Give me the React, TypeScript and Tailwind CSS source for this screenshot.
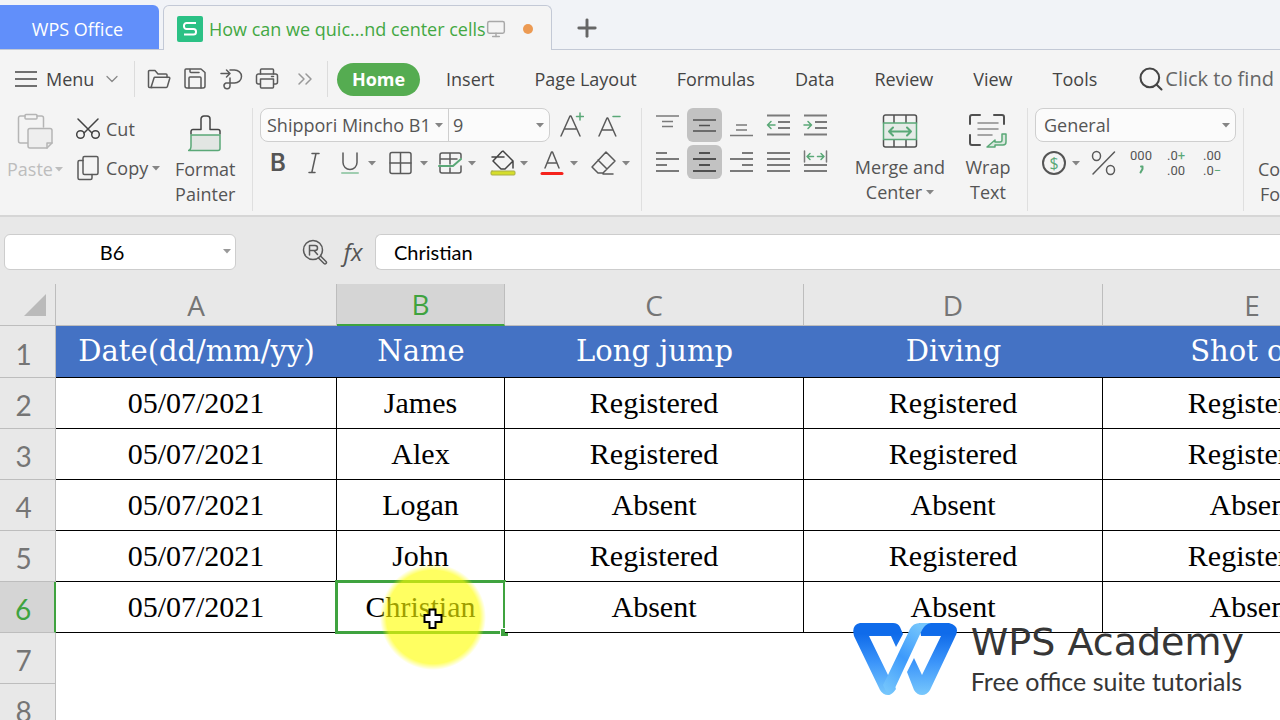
/**
 * Spreadsheet window: tab strip, ribbon, formula bar and the sheet itself.
 */

import { ReactNode } from 'react';
import { ChevronDown, ChevronsRight, Menu, Monitor, Plus, Search } from 'lucide-react';

interface ChildrenProps {
  children: ReactNode;
}

interface IconProps {
  w: number;
  h: number;
  className?: string;
  children: ReactNode;
}

function Icon({ w, h, className = 'text-[#5a5a5a]', children }: IconProps) {
  return (
    <svg
      width={w}
      height={h}
      viewBox={`0 0 ${w} ${h}`}
      fill="none"
      stroke="currentColor"
      strokeWidth="1.5"
      strokeLinecap="round"
      strokeLinejoin="round"
      className={`shrink-0 ${className}`}
      aria-hidden="true"
    >
      {children}
    </svg>
  );
}

const GREEN = '#5aa877';

function Caret({ className = 'text-[#858585]' }: { className?: string }) {
  return (
    <svg width="8" height="5" viewBox="0 0 8 5" className={`shrink-0 ${className}`} aria-hidden="true">
      <path d="M0 0h8L4 4.5z" fill="currentColor" />
    </svg>
  );
}

function Divider() {
  return <div className="w-px shrink-0 self-stretch bg-[#dfdfdf]" />;
}

/* ---------- Tab strip ---------- */

function TabStrip() {
  return (
    <header className="flex h-[50px] shrink-0 border-b border-[#c3c9d6] bg-[#f1f3f7] pt-[5px]">
      <button className="w-[159px] shrink-0 rounded-tr-md bg-[#618ffa] pr-1 pt-1 text-lg text-white">WPS Office</button>
      <div className="-mb-px ml-1 flex w-[389px] shrink-0 items-center rounded-t-md border border-b-0 border-[#c3c9d6] bg-[#f4f4f4] pl-[13px] pt-0.5">
        <svg width="26" height="26" viewBox="0 0 26 26" className="shrink-0" aria-hidden="true">
          <rect width="26" height="26" rx="2" fill="#2bc185" />
          <path
            d="M19 7H9.500a2.500 2.500 0 0 0-2.500 2.500v1a2.500 2.500 0 0 0 2.500 2.500h7a2.500 2.500 0 0 1 2.500 2.500v.5a2.500 2.500 0 0 1-2.500 2.500H7"
            fill="none"
            stroke="#fff"
            strokeWidth="2"
          />
        </svg>
        <span className="ml-1.5 whitespace-nowrap text-lg text-[#43a843]">How can we quic...nd center cells</span>
        <Monitor className="h-5 w-5 shrink-0 text-[#a8a8a8]" strokeWidth={1.75} />
        <span className="ml-auto mr-[18px] h-2.5 w-2.5 shrink-0 rounded-full bg-[#ec9a52]" />
      </div>
      <button aria-label="New tab" className="ml-[19px] flex w-8 items-center justify-center pt-0.5 text-[#666]">
        <Plus className="h-7 w-7" strokeWidth={2.5} />
      </button>
    </header>
  );
}

/* ---------- Menu bar ---------- */

const MENU_TABS = ['Insert', 'Page Layout', 'Formulas', 'Data', 'Review', 'View', 'Tools'];

function MenuBar() {
  return (
    <nav className="flex h-[58px] shrink-0 items-center whitespace-nowrap pl-[14px] text-lg text-[#444]">
      <button className="flex shrink-0 items-center">
        <svg width="24" height="24" viewBox="0 0 24 24" stroke="currentColor" strokeWidth="1.5" aria-hidden="true">
          <path d="M1 5h22M1 12h22M1 19h22" />
        </svg>
        <span className="ml-2 w-[50px] text-left">Menu</span>
        <ChevronDown className="ml-1.5 h-5 w-5 text-[#888]" strokeWidth={1.5} />
      </button>
      <div className="ml-3 h-9 w-px shrink-0 bg-[#dcdcdc]" />

      <div className="ml-3 flex shrink-0 items-center gap-3">
        <button aria-label="Open">
          <Icon w={24} h={24}>
            <path d="M5 20.500H2.500a1 1 0 0 1-1-1v-15a1 1 0 0 1 1-1h5.500l3 3.500h8a1 1 0 0 1 1 1v2.500" />
            <path d="M4 20.500l3-9.500a1 1 0 0 1 1-.7h14a.8.8 0 0 1 .8 1l-2.500 8.400a1 1 0 0 1-1 .8z" />
          </Icon>
        </button>
        <button aria-label="Save">
          <Icon w={24} h={24}>
            <path d="M3 2h15l4 3.500V19a2 2 0 0 1-2 2H4a2 2 0 0 1-2-2V3a1 1 0 0 1 1-1z" />
            <path d="M6 21V11a1 1 0 0 1 1-1h10a1 1 0 0 1 1 1v10M7 2.500V4.500a1 1 0 0 0 1 1h8" />
          </Icon>
        </button>
        <button aria-label="Export to PDF">
          <Icon w={24} h={24}>
            <path d="M2 6.500h8.500M7.500 3l3.500 3.500L7.500 10" />
            <path d="M11 3h4.500a7 6.500 0 0 1 0 13H7a3 3 0 1 0 4 3V11" />
          </Icon>
        </button>
        <button aria-label="Print">
          <Icon w={24} h={24}>
            <path d="M5.500 7V3a1 1 0 0 1 1-1h11a1 1 0 0 1 1 1v4" />
            <path d="M5 17H3.500A2 2 0 0 1 1.500 15V9a2 2 0 0 1 2-2h17a2 2 0 0 1 2 2v6a2 2 0 0 1-2 2H19M16.500 9.500h2" />
            <path d="M5.500 12h13v8a1 1 0 0 1-1 1h-11a1 1 0 0 1-1-1z" />
          </Icon>
        </button>
        <button aria-label="More" className="ml-0.5 text-[#999]">
          <ChevronsRight className="h-6 w-6" strokeWidth={1.5} />
        </button>
      </div>
      <div className="ml-2.5 h-9 w-px shrink-0 bg-[#dcdcdc]" />

      <button className="ml-[9px] h-[33px] w-[83px] shrink-0 rounded-full bg-[#55ac51] font-bold text-white">Home</button>
      <div className="ml-1.5 flex shrink-0">
        {MENU_TABS.map((tab) => (
          <button key={tab} className="px-5">
            {tab}
          </button>
        ))}
      </div>
      <label className="ml-5 flex min-w-0 flex-1 items-center text-xl text-[#666]">
        <Search className="h-7 w-7 shrink-0 text-[#444]" strokeWidth={1.75} />
        <input
          aria-label="Click to find"
          placeholder="Click to find"
          className="min-w-0 flex-1 bg-transparent outline-none placeholder:text-[#666]"
        />
      </label>
    </nav>
  );
}

/* ---------- Ribbon ---------- */

function ClipboardGroup() {
  return (
    <div className="flex w-[252px] shrink-0 items-start">
      <button className="flex w-[70px] flex-col items-center pt-[5px] text-[#bdbdbd]">
        <Icon w={38} h={38} className="text-[#b5b5b5]">
          <path d="M9 3H4.500a2 2 0 0 0-2 2v23a2 2 0 0 0 2 2H12M21 3h4.500a2 2 0 0 1 2 2v9" />
          <path d="M10 1.500h10a1 1 0 0 1 1 1V5a1 1 0 0 1-1 1H10a1 1 0 0 1-1-1V2.500a1 1 0 0 1 1-1z" />
          <path d="M14 15.500h20a2 2 0 0 1 2 2V30l-5 5H14a2 2 0 0 1-2-2V17.500a2 2 0 0 1 2-2z" fill="#eee" />
          <path d="M36 30h-5v5" />
        </Icon>
        <span className="mt-1 flex items-center gap-0.5">
          Paste
          <Caret className="text-[#bdbdbd]" />
        </span>
      </button>
      <div className="ml-1.5 flex flex-col gap-[11px] pt-[7px]">
        <button className="flex items-center gap-1.5">
          <Icon w={24} h={22} className="text-[#444]">
            <path d="M2 1l14 14M22 1L8 15" />
            <circle cx="4.500" cy="16.500" r="3.800" />
            <circle cx="19.500" cy="16.500" r="3.800" />
          </Icon>
          Cut
        </button>
        <button className="flex items-center gap-1.5">
          <Icon w={24} h={26}>
            <path d="M8.500 1.500h12a1.500 1.500 0 0 1 1.500 1.500v15a1.500 1.500 0 0 1-1.500 1.500h-12A1.500 1.500 0 0 1 7 18V3a1.500 1.500 0 0 1 1.500-1.500z" />
            <path d="M7 5.500H3.500A1.500 1.500 0 0 0 2 7v16a1.500 1.500 0 0 0 1.500 1.500h11A1.500 1.500 0 0 0 16 23v-3.500" />
          </Icon>
          <span className="flex items-center gap-1">
            Copy
            <Caret />
          </span>
        </button>
      </div>
      <button className="ml-3 flex w-[66px] flex-col items-center pt-[7px] leading-[25px]">
        <Icon w={34} h={38} className="text-[#444]">
          <path d="M3 19v-2.500a2 2 0 0 1 2-2h8V4a3 3 0 0 1 3-3h3a3 3 0 0 1 3 3v10.500h8a2 2 0 0 1 2 2V19" />
          <path d="M3 20h29v13.500a2 2 0 0 1-2 2H.5C2.500 35 3 33 3 31z" stroke={GREEN} fill="#e2e6e3" />
        </Icon>
        <span className="mt-1">
          Format
          <br />
          Painter
        </span>
      </button>
    </div>
  );
}

function FontGroup() {
  return (
    <div className="w-[388px] shrink-0 pl-[7px]">
      <div className="flex h-[34px] items-center">
        <div className="flex h-full w-[290px] rounded-lg border border-[#cfcfcf] bg-[#fbfbfb]">
          <div className="relative flex w-[188px] items-center border-r border-[#cfcfcf]">
            <select aria-label="Font" className="w-full appearance-none bg-transparent pl-1.5">
              <option>Shippori Mincho B1</option>
            </select>
            <Caret className="absolute right-[5px] text-[#858585]" />
          </div>
          <div className="relative flex flex-1 items-center">
            <select aria-label="Font size" className="w-full appearance-none bg-transparent pl-1">
              <option>9</option>
            </select>
            <Caret className="absolute right-[5px] text-[#858585]" />
          </div>
        </div>
        <button aria-label="Increase font size" className="ml-2.5">
          <Icon w={24} h={26}>
            <path d="M1 24L10 4h1l9 20M4.500 17h12" />
            <path d="M20 1v7M16.500 4.500h7" stroke={GREEN} />
          </Icon>
        </button>
        <button aria-label="Decrease font size" className="ml-3.5">
          <Icon w={24} h={26}>
            <path d="M1 24L9 6h.8l8 18M4 18h11" />
            <path d="M15 4.500h7" stroke={GREEN} />
          </Icon>
        </button>
      </div>
      <div className="mt-[7px] flex h-7 items-center">
        <button className="w-9 text-2xl font-semibold text-[#555] [font-family:Inter,sans-serif]">B</button>
        <button aria-label="Italic" className="flex w-9 justify-center">
          <Icon w={12} h={22}>
            <path d="M4 1.500h7M1 20.500h6M8 1.500L3.800 20.500" />
          </Icon>
        </button>
        <button aria-label="Underline" className="ml-2 flex w-9 items-center justify-between">
          <Icon w={20} h={24}>
            <path d="M3 2v9.500a7 7 0 0 0 14 0V2" />
            <path d="M2 22h16" stroke="#9fcdb0" strokeWidth="2" />
          </Icon>
          <Caret />
        </button>
        <button aria-label="Borders" className="ml-3 flex w-10 items-center justify-between">
          <Icon w={24} h={24}>
            <rect x="2" y="1.500" width="21" height="21" rx="2" />
            <path d="M12.500 2v20M2 12h21" />
          </Icon>
          <Caret />
        </button>
        <button aria-label="Cell style" className="ml-2.5 flex w-[38px] items-center justify-between">
          <Icon w={24} h={24}>
            <path d="M2 13V4a2 2 0 0 1 2-2h17a2 2 0 0 1 2 2v3M23 15v5a2 2 0 0 1-2 2H4a2 2 0 0 1-2-2v-4M12 2v11M12 17v5M2 8h17" />
            <path d="M1 15h14l8-7" stroke={GREEN} strokeWidth="2" />
          </Icon>
          <Caret />
        </button>
        <button aria-label="Fill colour" className="ml-3.5 flex w-[38px] items-center justify-between">
          <Icon w={26} h={26} className="text-[#444]">
            <path d="M2 7h12M12 1.500L3 11l8 8h4l8-8L13 1M20 8l3 3v7" />
            <rect x="1" y="21" width="24" height="4" rx="1" fill="#d5dd2b" stroke="#a9ae49" strokeWidth="1" />
          </Icon>
          <Caret />
        </button>
        <button aria-label="Font colour" className="ml-3 flex w-[38px] items-center justify-between">
          <Icon w={24} h={26}>
            <path d="M5 18L11.500 2h1L19 18M7 13h10" />
            <path d="M2 23.500h20" stroke="#f5231c" strokeWidth="3" />
          </Icon>
          <Caret />
        </button>
        <button aria-label="Clear" className="ml-3 flex w-10 items-center justify-between">
          <Icon w={28} h={26}>
            <path d="M16 2l9 9-12 12H8l-6-6zM8 10l9 9M13 24h10" />
          </Icon>
          <Caret />
        </button>
      </div>
    </div>
  );
}

interface AlignOption {
  label: string;
  active?: boolean;
  lines: string;
  strong?: boolean;
  accent?: string;
  posts?: string;
}

const ALIGN_OPTIONS: AlignOption[] = [
  { label: 'Align top', lines: 'M1 3h23M7 8.500h11M7 13.500h11', strong: true },
  { label: 'Align middle', lines: 'M1 7h23M7 12.500h11M1 18h23', strong: true, active: true },
  { label: 'Align bottom', lines: 'M7 12h11M7 17h11M1 22.500h23', strong: true },
  { label: 'Decrease indent', lines: 'M1 2.500h23M12 9h12M12 15h12M1 21.500h23', accent: 'M9 12H1.500M5 8.500L1.500 12L5 15.500' },
  { label: 'Increase indent', lines: 'M1 2.500h23M12 9h12M12 15h12M1 21.500h23', accent: 'M1 12h7.500M5 8.500L8.500 12L5 15.500' },
  { label: 'Align left', lines: 'M1 3h11M1 9h23M1 15h11M1 21h23' },
  { label: 'Align centre', lines: 'M7 3h11M1 9h23M7 15h11M1 21h23', active: true },
  { label: 'Align right', lines: 'M13 3h11M1 9h23M13 15h11M1 21h23' },
  { label: 'Justify', lines: 'M1 3h23M1 9h23M1 15h23M1 21h23' },
  {
    label: 'Distribute',
    lines: 'M1 15h23M1 21h23',
    posts: 'M1.500 1v11M23.500 1v11',
    accent: 'M10.500 6.500H4M7 3.500L4 6.500L7 9.500M14.500 6.500H21M18 3.500L21 6.500L18 9.500',
  },
];

function AlignGroup() {
  return (
    <div className="flex w-[385px] shrink-0">
      <div className="ml-2 grid h-[71px] w-[183px] grid-cols-5 gap-x-0.5 gap-y-[3px]">
        {ALIGN_OPTIONS.map(({ label, active, lines, strong, accent, posts }) => (
          <button
            key={label}
            aria-label={label}
            className={`flex items-center justify-center rounded-md ${active ? 'bg-[#c2c2c2]' : ''}`}
          >
            <Icon w={25} h={24} className={active ? 'text-[#505050]' : 'text-[#7a7a7a]'}>
              <path d={lines} strokeWidth={strong ? 1.5 : 2} strokeLinecap="butt" />
              {posts && <path d={posts} />}
              {accent && <path d={accent} stroke={GREEN} />}
            </Icon>
          </button>
        ))}
      </div>
      <button className="ml-[17px] flex w-[100px] flex-col items-center pt-1.5 leading-[25px]">
        <Icon w={36} h={34} className="text-[#505050]">
          <path d="M1.500 9V3a2 2 0 0 1 2-2h29a2 2 0 0 1 2 2v6M1.500 26v5a2 2 0 0 0 2 2h29a2 2 0 0 0 2-2v-5M12 1v8M24 1v8M12 26v7M24 26v7" />
          <rect x="1.500" y="9" width="33" height="16.500" fill="#e5ebe7" stroke={GREEN} />
          <path d="M7 17.500h22M11 13.500l-4 4 4 4M25 13.500l4 4-4 4" stroke={GREEN} strokeWidth="2" />
        </Icon>
        <span className="mt-[7px]">
          Merge and
          <span className="flex items-center justify-center gap-1">
            Center
            <Caret />
          </span>
        </span>
      </button>
      <button className="ml-2 flex w-[60px] flex-col items-center pt-1.5 leading-[25px]">
        <Icon w={40} h={34} className="text-[#505050]">
          <path d="M2 10V3a2 2 0 0 1 2-2h8M26 1h8a2 2 0 0 1 2 2v7M2 21v8a2 2 0 0 0 2 2h8" strokeWidth="2" />
          <path d="M10 9h20M10 15h20M10 21h14" stroke="#8a8a8a" />
          <path d="M34 20h4v8a3 3 0 0 1-3 3h-8v2h-8l8-7v2h5a2 2 0 0 0 2-2z" stroke={GREEN} fill="#dbe8df" />
        </Icon>
        <span className="mt-[7px]">
          Wrap
          <br />
          Text
        </span>
      </button>
    </div>
  );
}

function Digits({ children }: ChildrenProps) {
  return <span className="text-[13px] leading-[15px] [font-family:Roboto,sans-serif]">{children}</span>;
}

function NumberGroup() {
  return (
    <div className="w-[215px] shrink-0 px-[7px]">
      <div className="relative flex h-[34px] items-center rounded-lg border border-[#cfcfcf] bg-[#fbfbfb]">
        <select aria-label="Number format" className="w-full appearance-none bg-transparent pl-2">
          <option>General</option>
        </select>
        <Caret className="absolute right-[5px] text-[#858585]" />
      </div>
      <div className="mt-[7px] flex h-7 items-center text-[#555]">
        <button aria-label="Currency" className="ml-[7px] flex items-center gap-1.5">
          <span className="flex h-6 w-6 items-center justify-center rounded-full border-2 border-[#555] text-base leading-none text-[#5aa877]">
            $
          </span>
          <Caret />
        </button>
        <button aria-label="Percent" className="ml-[11px]">
          <Icon w={26} h={26}>
            <ellipse cx="5.500" cy="6" rx="4" ry="4.500" />
            <ellipse cx="19.500" cy="20" rx="4" ry="4.500" />
            <path d="M23.500 2L2 24" />
          </Icon>
        </button>
        <button aria-label="Comma style" className="ml-2.5 flex w-7 flex-col items-center">
          <Digits>000</Digits>
          <Icon w={8} h={15} className="text-[#5aa877]">
            <path d="M4 3.500h1.500V6L3.500 9.500" strokeWidth="2" />
          </Icon>
        </button>
        <button aria-label="Increase decimal" className="ml-3 flex w-6 flex-col items-start">
          <Digits>
            .0<span className="text-[#5aa877]">+</span>
          </Digits>
          <Digits>.00</Digits>
        </button>
        <button aria-label="Decrease decimal" className="ml-3 flex w-6 flex-col items-start">
          <Digits>.00</Digits>
          <Digits>
            .0<span className="text-[#5aa877]">−</span>
          </Digits>
        </button>
      </div>
    </div>
  );
}

function Ribbon() {
  return (
    <section className="flex h-[109px] shrink-0 overflow-hidden whitespace-nowrap border-b-2 border-[#d6d6d6] pb-1 text-lg text-[#555]">
      <ClipboardGroup />
      <Divider />
      <FontGroup />
      <Divider />
      <AlignGroup />
      <Divider />
      <NumberGroup />
      <Divider />
      <button className="ml-3.5 shrink-0 self-start pt-[49px] leading-[25px]">
        Conditional
        <br />
        Formatting
      </button>
    </section>
  );
}

/* ---------- Formula bar ---------- */

function FormulaBar() {
  return (
    <section className="flex h-[67px] shrink-0 items-center bg-[#e8e8e8] pl-1 pt-0.5 text-xl text-black [font-family:Lato,sans-serif]">
      <div className="relative flex h-9 w-[232px] shrink-0 items-center rounded-md border border-[#cdcdcd] bg-white">
        <input aria-label="Name box" defaultValue="B6" className="w-full bg-transparent pr-4 text-center outline-none" />
        <Caret className="absolute right-1 text-[#999]" />
      </div>
      <button aria-label="Find function" className="ml-16">
        <Icon w={28} h={28}>
          <circle cx="13" cy="12" r="9.500" />
          <path d="M9.500 17V7.500h5.500a2.500 2.500 0 0 1 0 5H9.500M14 12.500l3.500 4" />
          <path d="M18.500 20l5.500 5.500a1.300 1.300 0 0 0 2-2L20.500 18" />
        </Icon>
      </button>
      <button className="ml-[7px] w-9 text-2xl italic text-[#555] [font-family:'Open_Sans',sans-serif]">fx</button>
      <input
        aria-label="Formula"
        defaultValue="Christian"
        className="ml-1 h-9 min-w-0 flex-1 rounded-l-md border border-r-0 border-[#cdcdcd] bg-white pl-[18px] outline-none"
      />
    </section>
  );
}

/* ---------- Sheet ---------- */

const COLUMNS = ['A', 'B', 'C', 'D', 'E'];
const TITLES = ['Date(dd/mm/yy)', 'Name', 'Long jump', 'Diving', 'Shot out'];
const ROWS = [
  ['05/07/2021', 'James', 'Registered', 'Registered', 'Registered'],
  ['05/07/2021', 'Alex', 'Registered', 'Registered', 'Registered'],
  ['05/07/2021', 'Logan', 'Absent', 'Absent', 'Absent'],
  ['05/07/2021', 'John', 'Registered', 'Registered', 'Registered'],
  ['05/07/2021', 'Christian', 'Absent', 'Absent', 'Absent'],
];
const EMPTY_ROWS = [7, 8, 9, 10];

function RowHeader({ n, active = false }: { n: number; active?: boolean }) {
  return (
    <th
      scope="row"
      className={`border-b border-b-[#bdbdbd] pr-2 pt-1 text-[28px] font-normal leading-none [font-family:Lato,sans-serif] ${
        active
          ? 'border-r-2 border-r-[#3fa33f] bg-[#d5d5d5] text-[#3fa33f]'
          : 'border-r border-r-[#bdbdbd] bg-[#e8e8e8] text-[#757575]'
      }`}
    >
      {n}
    </th>
  );
}

/* Green frame, click highlight and cross pointer over the selected cell */
function Selection() {
  return (
    <>
      <div className="absolute -inset-x-0.5 -bottom-0.5 -top-0.5 border-[3px] border-[#3fa33f]" />
      <div className="absolute -bottom-1 -right-1 h-2 w-2 border-l border-t border-white bg-[#3fa33f]" />
      <div className="absolute -top-[18px] left-[43px] h-[106px] w-[106px] rounded-full bg-[radial-gradient(closest-side,rgba(255,255,0,0.62)_88%,rgba(255,255,0,0)_100%)]" />
      <svg width="20" height="22" viewBox="0 0 20 22" className="absolute left-[86px] top-[26px]" aria-hidden="true">
        <path d="M6.500 1.500h6v5.500h6v7h-6v6h-6v-6h-5v-7h5z" fill="#fff" stroke="#000" strokeWidth="2" />
      </svg>
    </>
  );
}

function Sheet() {
  return (
    <table className="w-[1402px] table-fixed border-separate border-spacing-0 text-center [font-family:'Liberation_Serif',serif]">
      <colgroup>
        <col className="w-[56px]" />
        <col className="w-[281px]" />
        <col className="w-[168px]" />
        <col className="w-[299px]" />
        <col className="w-[299px]" />
        <col className="w-[299px]" />
      </colgroup>
      <thead>
        <tr className="h-[42px] bg-[#e8e8e8] text-[28px] leading-none text-[#757575] [font-family:'Open_Sans',sans-serif]">
          <th aria-label="Select all" className="border-b border-r border-[#bdbdbd]">
            <svg width="22" height="22" viewBox="0 0 22 22" className="ml-6" aria-hidden="true">
              <path d="M22 0v22H0z" fill="#bababa" />
            </svg>
          </th>
          {COLUMNS.map((c) => (
            <th
              key={c}
              scope="col"
              className={`font-normal ${
                c === 'B'
                  ? 'border-b-2 border-r border-b-[#3fa33f] border-r-[#bdbdbd] bg-[#d5d5d5] text-[#3fa33f]'
                  : 'border-b border-r border-[#bdbdbd]'
              }`}
            >
              {c}
            </th>
          ))}
        </tr>
      </thead>
      <tbody>
        <tr className="h-[52px]">
          <RowHeader n={1} />
          {TITLES.map((title) => (
            <td
              key={title}
              className="border-b border-black bg-[#4472c4] text-[29px] leading-none text-white [font-family:'DejaVu_Serif',serif]"
            >
              {title}
            </td>
          ))}
        </tr>
        {ROWS.map((row, r) => (
          <tr key={r} className="h-[51px]">
            <RowHeader n={r + 2} active={r === 4} />
            {row.map((value, c) => (
              <td
                key={c}
                className="relative border-b border-r border-black bg-white text-[30px] leading-none text-black"
              >
                {value}
                {r === 4 && c === 1 && <Selection />}
              </td>
            ))}
          </tr>
        ))}
        {EMPTY_ROWS.map((n) => (
          <tr key={n} className="h-[51px]">
            <RowHeader n={n} />
            <td colSpan={5} />
          </tr>
        ))}
      </tbody>
    </table>
  );
}

function Watermark() {
  return (
    <div className="absolute bottom-[22px] right-9 flex items-center gap-3.5 whitespace-nowrap text-[#363636]">
      <svg width="104" height="72" viewBox="0 0 104 72" aria-hidden="true">
        <defs>
          <linearGradient id="wps" x1="0" y1="0" x2="0" y2="1">
            <stop offset="0.15" stopColor="#0f6bea" />
            <stop offset="0.55" stopColor="#3c95fa" />
            <stop offset="1" stopColor="#78c8fc" />
          </linearGradient>
          <linearGradient id="wpsFold" x1="0.7" y1="0" x2="0.2" y2="1">
            <stop offset="0" stopColor="#74c5fc" />
            <stop offset="0.5" stopColor="#3d9afb" />
            <stop offset="1" stopColor="#74c5fc" />
          </linearGradient>
        </defs>
        <path
          d="M7 0H40Q45 0 47 4L50 11L43 24L38 13H16L35 52L41 61L43 66Q39 72 35 72Q30 72 27 67L1 13Q-2 2 7 0z"
          fill="url(#wps)"
        />
        <path
          d="M66 0H96Q108 3 102 14L77 67Q74 72 69 72Q64 72 61 67L54 49L61 35L69 52L88 13H68z"
          fill="url(#wps)"
        />
        <path d="M35 52L57 6Q60 0 67 0H78Q72 1 69 7L42 65Q39 71 35 72L30 62z" fill="url(#wpsFold)" />
      </svg>
      <div>
        <div className="text-[38px] leading-[44px] [font-family:'DejaVu_Sans',sans-serif]">WPS Academy</div>
        <div className="text-[25px] leading-[34px] [font-family:Lato,sans-serif]">Free office suite tutorials</div>
      </div>
    </div>
  );
}

export default function App() {
  return (
    <div className="flex h-screen flex-col overflow-hidden bg-[#f4f4f4] [font-family:'Open_Sans','Noto_Sans',sans-serif]">
      <TabStrip />
      <MenuBar />
      <Ribbon />
      <FormulaBar />
      <main className="relative min-h-0 flex-1 overflow-hidden bg-white">
        <Sheet />
        <Watermark />
      </main>
    </div>
  );
}
